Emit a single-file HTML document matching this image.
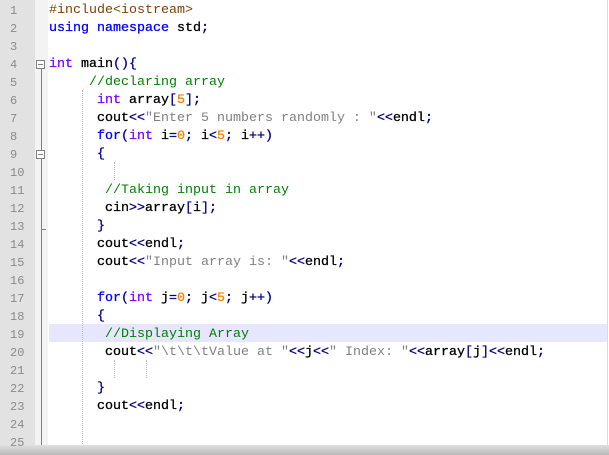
<!DOCTYPE html><html><head><style>
body{margin:0;width:609px;height:455px;overflow:hidden;background:#fff;position:relative;font-family:"Liberation Mono",monospace;font-size:13.33px}
.g{position:absolute;left:0;top:0;width:35px;height:455px;background:#e2e2e2}
.f{position:absolute;left:35px;top:0;width:13px;height:455px;background:#f3f3f3}
.n{position:absolute;left:0;width:30px;text-align:left;padding-left:10px;color:#8a8a8a;height:18px;line-height:18px;font-size:12px;transform:translateY(2px)}
.l{position:absolute;left:49px;height:18px;line-height:18px;white-space:pre;color:#000;transform:translateY(2px);-webkit-text-stroke:0.3px}
.k{color:#0000ff}.t{color:#8000ff}.o{color:#000080}.d{color:#ff8000}.s{color:#808080;-webkit-text-stroke:0}.c{color:#008000;-webkit-text-stroke:0}.p{color:#804000;-webkit-text-stroke:0}
.box{position:absolute;left:36px;width:9px;height:9px;border:1px solid #808080;background:#fff;box-sizing:border-box}
.box:after{content:"";position:absolute;left:1px;top:3px;width:5px;height:1px;background:#808080}
</style></head><body>
<div class="g"></div><div class="f"></div>
<div style="position:absolute;left:49px;top:324px;width:558px;height:18px;background:#e6e6ff"></div>
<div style="position:absolute;left:41px;top:67px;width:1px;height:383px;background:#808080"></div>
<div style="position:absolute;left:41px;top:229px;width:5px;height:1px;background:#808080"></div>
<div style="position:absolute;left:82px;top:90px;height:360px;border-left:1px dotted #bbb"></div>
<div style="position:absolute;left:114px;top:162px;height:18px;border-left:1px dotted #bbb"></div>
<div style="position:absolute;left:114px;top:360px;height:18px;border-left:1px dotted #bbb"></div>
<div style="position:absolute;left:146px;top:360px;height:18px;border-left:1px dotted #bbb"></div>
<div style="position:absolute;left:607px;top:0;width:1px;height:445px;background:#d8d8e8"></div>
<div style="position:absolute;left:0;top:445px;width:609px;height:10px;background:linear-gradient(#e0e0e0,#b8b8b8)"></div>
<div class="box" style="top:60px"></div><div class="box" style="top:150px"></div>
<div class="n" style="top:0">1</div><div class="n" style="top:18px">2</div><div class="n" style="top:36px">3</div><div class="n" style="top:54px">4</div><div class="n" style="top:72px">5</div><div class="n" style="top:90px">6</div><div class="n" style="top:108px">7</div><div class="n" style="top:126px">8</div><div class="n" style="top:144px">9</div><div class="n" style="top:162px">10</div><div class="n" style="top:180px">11</div><div class="n" style="top:198px">12</div><div class="n" style="top:216px">13</div><div class="n" style="top:234px">14</div><div class="n" style="top:252px">15</div><div class="n" style="top:270px">16</div><div class="n" style="top:288px">17</div><div class="n" style="top:306px">18</div><div class="n" style="top:324px">19</div><div class="n" style="top:342px">20</div><div class="n" style="top:360px">21</div><div class="n" style="top:378px">22</div><div class="n" style="top:396px">23</div><div class="n" style="top:414px">24</div><div class="n" style="top:432px">25</div>
<div class="l" style="top:0"><span class="p">#include&lt;iostream&gt;</span></div>
<div class="l" style="top:18px"><span class="k">using namespace</span> std<span class="o">;</span></div>
<div class="l" style="top:54px"><span class="t">int</span> main<span class="o">(){</span></div>
<div class="l" style="top:72px">     <span class="c">//declaring array</span></div>
<div class="l" style="top:90px">      <span class="t">int</span> array<span class="o">[</span><span class="d">5</span><span class="o">];</span></div>
<div class="l" style="top:108px">      cout<span class="o">&lt;&lt;</span><span class="s">"Enter 5 numbers randomly : "</span><span class="o">&lt;&lt;</span>endl<span class="o">;</span></div>
<div class="l" style="top:126px">      <span class="k">for</span><span class="o">(</span><span class="t">int</span> i<span class="o">=</span><span class="d">0</span><span class="o">;</span> i<span class="o">&lt;</span><span class="d">5</span><span class="o">;</span> i<span class="o">++)</span></div>
<div class="l" style="top:144px">      <span class="o">{</span></div>
<div class="l" style="top:180px">       <span class="c">//Taking input in array</span></div>
<div class="l" style="top:198px">       cin<span class="o">&gt;&gt;</span>array<span class="o">[</span>i<span class="o">];</span></div>
<div class="l" style="top:216px">      <span class="o">}</span></div>
<div class="l" style="top:234px">      cout<span class="o">&lt;&lt;</span>endl<span class="o">;</span></div>
<div class="l" style="top:252px">      cout<span class="o">&lt;&lt;</span><span class="s">"Input array is: "</span><span class="o">&lt;&lt;</span>endl<span class="o">;</span></div>
<div class="l" style="top:288px">      <span class="k">for</span><span class="o">(</span><span class="t">int</span> j<span class="o">=</span><span class="d">0</span><span class="o">;</span> j<span class="o">&lt;</span><span class="d">5</span><span class="o">;</span> j<span class="o">++)</span></div>
<div class="l" style="top:306px">      <span class="o">{</span></div>
<div class="l" style="top:324px">       <span class="c">//Displaying Array</span></div>
<div class="l" style="top:342px">       cout<span class="o">&lt;&lt;</span><span class="s">"\t\t\tValue at "</span><span class="o">&lt;&lt;</span>j<span class="o">&lt;&lt;</span><span class="s">" Index: "</span><span class="o">&lt;&lt;</span>array<span class="o">[</span>j<span class="o">]&lt;&lt;</span>endl<span class="o">;</span></div>
<div class="l" style="top:378px">      <span class="o">}</span></div>
<div class="l" style="top:396px">      cout<span class="o">&lt;&lt;</span>endl<span class="o">;</span></div>
</body></html>
